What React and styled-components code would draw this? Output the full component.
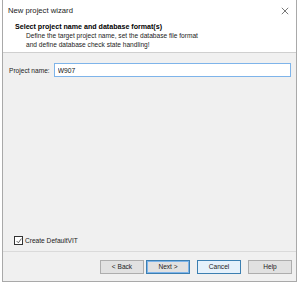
import React, { useState } from "react";
import styled, { createGlobalStyle } from "styled-components";

const GlobalStyle = createGlobalStyle`
  html, body {
    margin: 0;
    padding: 0;
    background: #ffffff;
  }
  body {
    font-family: "Liberation Sans", Arial, sans-serif;
    color: #1a1a1a;
  }
`;

const Screen = styled.div`
  width: 300px;
  height: 284px;
  padding: 0 3px 2px 2px;
  box-sizing: border-box;
  display: flex;
`;

const Window = styled.div`
  flex: 1;
  display: flex;
  flex-direction: column;
  border: 1px solid #a9a9a9;
  border-top: none;
  background: #f0f0f0;
`;

const TitleBar = styled.div`
  height: 21px;
  display: flex;
  align-items: center;
  justify-content: space-between;
  padding: 0 7px 0 5px;
  background: #ffffff;
  font-size: 7.7px;
  color: #222;
`;

const CloseIcon = styled.svg`
  width: 8px;
  height: 8px;
`;

const Banner = styled.div`
  background: #ffffff;
  height: 29px;
  padding: 2px 0 0 12px;
  border-bottom: 1px solid #cfcfcf;
`;

const BannerTitle = styled.div`
  font-weight: bold;
  font-size: 7.1px;
  line-height: 9px;
  color: #000;
`;

const BannerText = styled.div`
  font-size: 6.6px;
  line-height: 8.5px;
  padding-left: 11px;
  color: #222;
`;

const Body = styled.div`
  flex: 1;
  display: flex;
  flex-direction: column;
  padding: 10px 5px 0 6px;
`;

const Field = styled.div`
  display: flex;
  align-items: center;
  gap: 4px;
`;

const Label = styled.label`
  font-size: 6.6px;
  color: #222;
`;

const Input = styled.input`
  flex: 1;
  height: 14px;
  box-sizing: border-box;
  border: 1px solid #7eb4ea;
  background: #ffffff;
  font-family: "Liberation Sans", Arial, sans-serif;
  font-size: 6.7px;
  padding: 0 3px;
  color: #111;
  outline: none;
`;

const Spacer = styled.div`
  flex: 1;
`;

const CheckRow = styled.label`
  display: flex;
  align-items: center;
  gap: 2px;
  padding: 0 0 6px 5px;
  font-size: 6.6px;
  color: #222;
`;

const Box = styled.span`
  width: 7px;
  height: 7px;
  border: 1px solid #333;
  background: #fff;
  display: flex;
  align-items: center;
  justify-content: center;
`;

const Footer = styled.div`
  border-top: 1px solid #dadada;
  height: 29px;
  display: flex;
  align-items: center;
  justify-content: flex-end;
  padding: 0 4px 0 0;
`;

const Button = styled.button`
  width: 44px;
  height: 14px;
  padding: 0;
  margin-left: ${({ $tight }) => ($tight ? "2px" : "7px")};
  font-family: "Liberation Sans", Arial, sans-serif;
  font-size: 6.6px;
  color: #222;
  border: 1px solid ${({ $primary, $focus }) =>
    $primary || $focus ? "#3c7fb1" : "#adadad"};
  background: ${({ $focus }) => ($focus ? "#e5f1fb" : "#e1e1e1")};
  box-shadow: ${({ $primary }) => ($primary ? "inset 0 0 0 1px #7eb4ea" : "none")};
`;

export default function App() {
  const [name, setName] = useState("W907");
  return (
    <>
      <GlobalStyle />
      <Screen>
        <Window>
          <TitleBar>
            <span>New project wizard</span>
            <CloseIcon viewBox="0 0 10 10">
              <path d="M1 1 L9 9 M9 1 L1 9" stroke="#555" strokeWidth="1" />
            </CloseIcon>
          </TitleBar>
          <Banner>
            <BannerTitle>Select project name and database format(s)</BannerTitle>
            <BannerText>Define the target project name, set the database file format</BannerText>
            <BannerText>and define database check state handling!</BannerText>
          </Banner>
          <Body>
            <Field>
              <Label>Project name:</Label>
              <Input value={name} onChange={(e) => setName(e.target.value)} />
            </Field>
            <Spacer />
            <CheckRow>
              <Box>
                <svg width="6" height="6" viewBox="0 0 10 10">
                  <path d="M1 5 L4 8 L9 1" stroke="#333" strokeWidth="1.3" fill="none" />
                </svg>
              </Box>
              Create DefaultVIT
            </CheckRow>
          </Body>
          <Footer>
            <Button>&lt; Back</Button>
            <Button $tight $primary>Next &gt;</Button>
            <Button $focus>Cancel</Button>
            <Button>Help</Button>
          </Footer>
        </Window>
      </Screen>
    </>
  );
}
